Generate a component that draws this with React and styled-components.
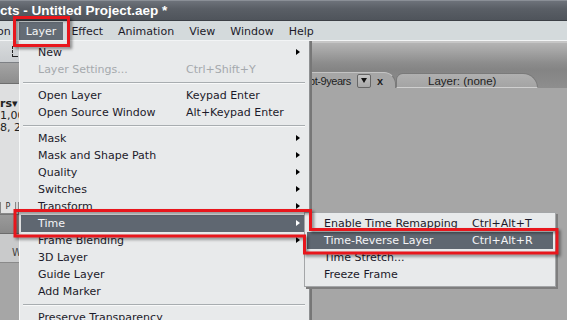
import React from "react";
import styled, { createGlobalStyle } from "styled-components";

const GlobalStyle = createGlobalStyle`
  html, body {
    margin: 0;
    padding: 0;
    overflow: hidden;
    background: #a6a6a6;
  }
`;

const MENU_FONT = `"DejaVu Sans", Verdana, sans-serif`;
const UI_FONT = `"Liberation Sans", Arial, sans-serif`;

const Screen = styled.div`
  position: relative;
  width: 567px;
  height: 320px;
  overflow: hidden;
  display: grid;
  grid-template-rows: 21px 20px 1fr;
  font-family: ${MENU_FONT};
  font-size: 11px;
`;

const TitleBar = styled.div`
  display: flex;
  align-items: center;
  background: linear-gradient(#6d727a, #5a5f66 40%, #4f545b);
  border-top: 1px solid #8a8f96;
  border-bottom: 1px solid #3c4046;
  box-sizing: border-box;
  color: #fff;
  font-family: ${UI_FONT};
  font-weight: bold;
  font-size: 13.5px;
  white-space: nowrap;
`;

const MenuBar = styled.div`
  display: flex;
  align-items: stretch;
  background: #d4dadc;
  border-bottom: 1px solid #f2f4f5;
  box-sizing: border-box;
`;

const MenuTitle = styled.div`
  display: flex;
  align-items: center;
  padding: 0 7px;
  margin: 1px 1px 0 0;
  color: ${(p) => (p.$active ? "#f4f4f4" : "#1c1a2a")};
  background: ${(p) => (p.$active ? "#646c75" : "transparent")};
  white-space: nowrap;
  &:first-child {
    margin-left: -3px;
    padding-left: 0;
  }
`;

const Workspace = styled.div`
  display: flex;
  min-height: 0;
`;

const LeftPanel = styled.div`
  width: 300px;
  display: flex;
  flex-direction: column;
  border-right: 1px solid #6a6a6a;
`;

const Toolbar = styled.div`
  height: 21px;
  display: flex;
  align-items: center;
  padding-left: 12px;
  background: linear-gradient(#d8dbdd, #c9cccf);
  border-bottom: 1px solid #7d8084;
`;

const MarqueeIcon = styled.span`
  width: 5px;
  height: 9px;
  border: 1px dashed #222;
  border-right: none;
`;

const PanelHead = styled.div`
  height: 20px;
  background: linear-gradient(#a4a4a4, #8d8d8d);
  border-bottom: 1px solid #6e6e6e;
`;

const InfoArea = styled.div`
  flex: 0 0 118px;
  background: #dedfe0;
  padding-top: 14px;
  box-sizing: border-box;
  display: flex;
  flex-direction: column;
  color: #222;
  font-family: ${MENU_FONT};
  font-size: 11px;
  line-height: 12px;
`;

const InfoLine = styled.div`
  white-space: nowrap;
  font-weight: ${(p) => (p.$bold ? "bold" : "normal")};
`;

const ButtonRow = styled.div`
  height: 12px;
  display: flex;
  gap: 2px;
  background: #d6d6d6;
  border-bottom: 1px solid #777;
`;

const TinyButton = styled.div`
  width: 14px;
  border: 1px solid #888;
  border-top: none;
  background: #e2e2e2;
  font-size: 8px;
  line-height: 10px;
  text-align: center;
  color: #333;
`;

const DarkStrip = styled.div`
  height: 18px;
  background: linear-gradient(#9a9a9a, #8a8a8a);
  border-bottom: 1px solid #6c6c6c;
`;

const LightStrip = styled.div`
  height: 29px;
  background: #c9cacb;
  display: flex;
  align-items: flex-end;
  padding: 0 0 4px 12px;
  box-sizing: border-box;
  color: #444;
  font-size: 10px;
  border-bottom: 1px solid #8a8a8a;
`;

const GrayFill = styled.div`
  flex: 1;
  background: #a6a6a6;
`;

const RightPanel = styled.div`
  flex: 1;
  display: flex;
  flex-direction: column;
`;

const PanelHeader = styled.div`
  height: 47px;
  display: flex;
  flex-direction: column;
  justify-content: flex-end;
  background: linear-gradient(#b4b4b4, #8c8c8c 45%, #848484 60%, #8e8e8e);
  border-top: 2px solid #c6c6c6;
  box-sizing: border-box;
`;

const TabRow = styled.div`
  height: 16px;
  display: flex;
  align-items: flex-end;
  font-family: ${UI_FONT};
  font-size: 11.5px;
  color: #1e1e1e;
`;

const ActiveTab = styled.div`
  width: 95px;
  height: 100%;
  display: flex;
  align-items: center;
  gap: 6px;
  padding-right: 12px;
  box-sizing: border-box;
  justify-content: flex-end;
  white-space: nowrap;
  overflow: hidden;
  background: #a6a6a6;
  border-top: 1px solid #c4c4c4;
  border-right: 1px solid #7a7a7a;
  border-top-right-radius: 12px;
`;

const TabText = styled.span`
  flex: none;
  font-size: 11px;
  letter-spacing: -0.45px;
`;

const DropButton = styled.div`
  flex: none;
  width: 12px;
  height: 12px;
  border: 1px solid #666;
  border-radius: 2px;
  background: linear-gradient(#c4c4c4, #a8a8a8);
  display: flex;
  align-items: center;
  justify-content: center;
  &::after {
    content: "";
    border-left: 3.5px solid transparent;
    border-right: 3.5px solid transparent;
    border-top: 5px solid #111;
  }
`;

const CloseMark = styled.span`
  flex: none;
  font-weight: bold;
  font-size: 11px;
`;

const Tab = styled.div`
  width: 142px;
  height: 15px;
  box-sizing: border-box;
  padding-left: 31px;
  display: flex;
  align-items: center;
  background: linear-gradient(#b0b0b0, #a4a4a4);
  border: 1px solid #7a7a7a;
  border-bottom: 1px solid #cfcfcf;
  border-radius: 7px 16px 0 0;
`;

const PanelBody = styled.div`
  flex: 1;
  background: #a6a6a6;
`;

const Dropdown = styled.div`
  position: absolute;
  left: 19px;
  top: 41px;
  width: 291px;
  padding-top: 3px;
  background: #e8eaeb;
  border-left: 1px solid #f6f7f7;
  border-right: 1px solid #8d8f91;
  box-shadow: 2px 0 0 #777;
  box-sizing: border-box;
`;

const Submenu = styled.div`
  position: absolute;
  left: 304px;
  top: 212px;
  width: 252px;
  padding: 2px 0 3px;
  background: #e8eaeb;
  border: 1px solid #a4a6a8;
  box-shadow: 2px 2px 0 #7e7e7e;
  box-sizing: border-box;
`;

const Item = styled.div`
  position: relative;
  height: 17px;
  display: flex;
  align-items: center;
  margin: 0 ${(p) => p.$inset}px 0 ${(p) => p.$insetLeft}px;
  padding-left: ${(p) => p.$pad}px;
  color: ${(p) => (p.$disabled ? "#a5a9ad" : p.$active ? "#f4f4f6" : "#1c1a2a")};
  background: ${(p) => (p.$active ? "#5f6771" : "transparent")};
  white-space: nowrap;
`;

const Label = styled.span`
  width: ${(p) => p.$w}px;
`;

const Arrow = styled.span`
  position: absolute;
  right: 5px;
  top: 5px;
  border-top: 3.5px solid transparent;
  border-bottom: 3.5px solid transparent;
  border-left: 4px solid ${(p) => (p.$active ? "#fff" : "#000")};
`;

const Separator = styled.div`
  height: 9px;
  display: flex;
  align-items: center;
  padding: 0 4px 0 3px;
  &::after {
    content: "";
    flex: 1;
    height: 1px;
    background: #a8adb0;
    box-shadow: 0 1px 0 #f8f9f9;
  }
`;

const Callouts = styled.svg`
  position: absolute;
  left: 0;
  top: 0;
  pointer-events: none;
  filter: drop-shadow(2px 2px 1.5px rgba(0, 0, 0, 0.45));
`;

const menuTitles = ["on", "Layer", "Effect", "Animation", "View", "Window", "Help"];

const layerMenu = [
  { label: "New", sub: true },
  { label: "Layer Settings...", key: "Ctrl+Shift+Y", disabled: true },
  { sep: true },
  { label: "Open Layer", key: "Keypad Enter" },
  { label: "Open Source Window", key: "Alt+Keypad Enter" },
  { sep: true },
  { label: "Mask", sub: true },
  { label: "Mask and Shape Path", sub: true },
  { label: "Quality", sub: true },
  { label: "Switches", sub: true },
  { label: "Transform", sub: true },
  { label: "Time", sub: true, active: true },
  { label: "Frame Blending", sub: true },
  { label: "3D Layer" },
  { label: "Guide Layer" },
  { label: "Add Marker" },
  { sep: true },
  { label: "Preserve Transparency" },
];

const timeMenu = [
  { label: "Enable Time Remapping", key: "Ctrl+Alt+T" },
  { label: "Time-Reverse Layer", key: "Ctrl+Alt+R", active: true },
  { label: "Time Stretch..." },
  { label: "Freeze Frame" },
];

export default function App() {
  return (
    <>
      <GlobalStyle />
      <Screen>
        <TitleBar>cts - Untitled Project.aep *</TitleBar>
        <MenuBar>
          {menuTitles.map((t) => (
            <MenuTitle key={t} $active={t === "Layer"}>
              {t}
            </MenuTitle>
          ))}
        </MenuBar>
        <Workspace>
          <LeftPanel>
            <Toolbar>
              <MarqueeIcon />
            </Toolbar>
            <PanelHead />
            <InfoArea>
              <InfoLine $bold>rs▾</InfoLine>
              <InfoLine>1,00</InfoLine>
              <InfoLine>8, 2</InfoLine>
            </InfoArea>
            <ButtonRow>
              <TinyButton>P</TinyButton>
              <TinyButton>P</TinyButton>
            </ButtonRow>
            <DarkStrip />
            <LightStrip>W</LightStrip>
            <GrayFill />
          </LeftPanel>
          <RightPanel>
            <PanelHeader>
              <TabRow>
                <ActiveTab>
                  <TabText>kbt-9years</TabText>
                  <DropButton />
                  <CloseMark>x</CloseMark>
                </ActiveTab>
                <Tab>Layer: (none)</Tab>
              </TabRow>
            </PanelHeader>
            <PanelBody />
          </RightPanel>
        </Workspace>

        <Dropdown>
          {layerMenu.map((m, i) =>
            m.sep ? (
              <Separator key={i} />
            ) : (
              <Item
                key={i}
                $active={m.active}
                $disabled={m.disabled}
                $inset={4}
                $insetLeft={1}
                $pad={17}
              >
                <Label $w={148}>{m.label}</Label>
                {m.key && <span>{m.key}</span>}
                {m.sub && <Arrow $active={m.active} />}
              </Item>
            )
          )}
        </Dropdown>

        <Submenu>
          {timeMenu.map((m) => (
            <Item key={m.label} $active={m.active} $inset={2} $insetLeft={2} $pad={17}>
              <Label $w={148}>{m.label}</Label>
              {m.key && <span>{m.key}</span>}
            </Item>
          ))}
        </Submenu>

        <Callouts width="567" height="320" viewBox="0 0 567 320">
          <g fill="none" stroke="#e8161c" strokeWidth="3" strokeLinejoin="miter">
            <rect x="14.5" y="17.5" width="54" height="28" />
            <path d="M15 210.5 H310.5 V229.5 H557 V253 H304.5 V236 H15 Z" />
          </g>
        </Callouts>
      </Screen>
    </>
  );
}
